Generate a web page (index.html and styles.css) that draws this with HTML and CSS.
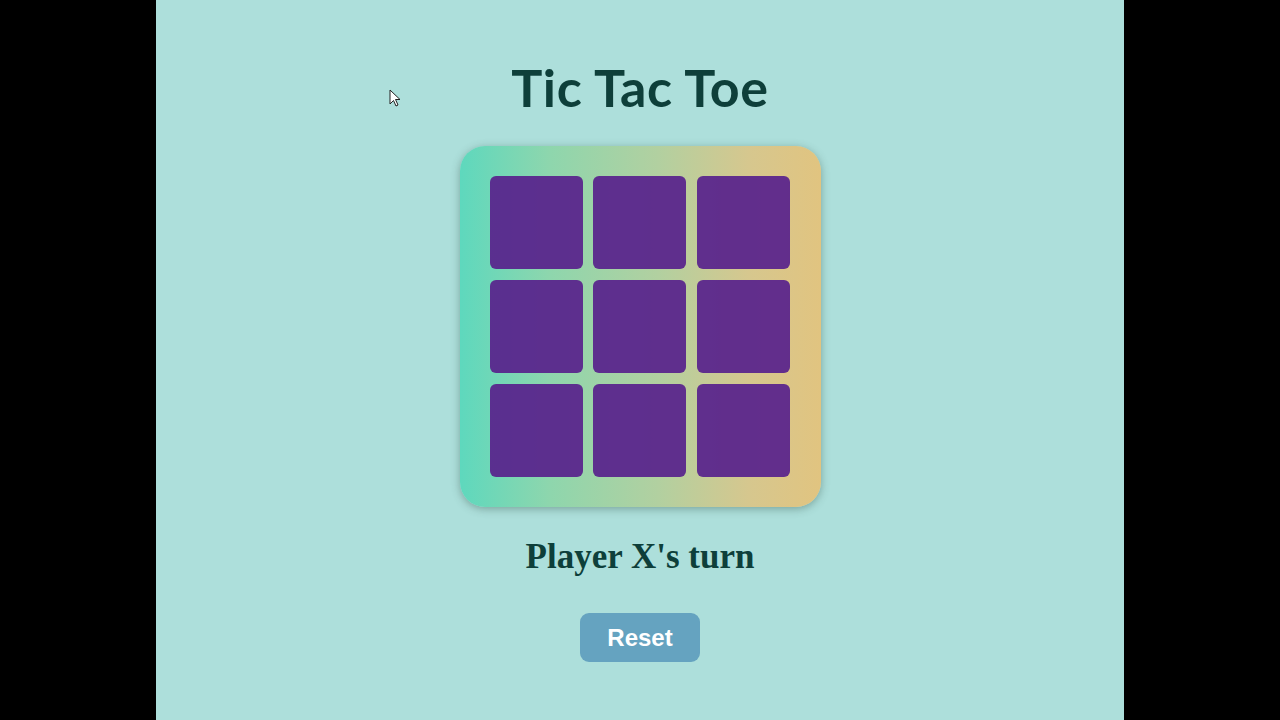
FILE: index.html
```html
<!DOCTYPE html>
<html lang="en">
<head>
<meta charset="utf-8">
<title>Tic Tac Toe</title>
<link rel="stylesheet" href="styles.css">
</head>
<body>
<main class="page">
  <h1 class="title">Tic Tac Toe</h1>
  <div class="board">
    <div class="cell"></div><div class="cell"></div><div class="cell"></div>
    <div class="cell"></div><div class="cell"></div><div class="cell"></div>
    <div class="cell"></div><div class="cell"></div><div class="cell"></div>
  </div>
  <p class="status">Player X's turn</p>
  <button class="reset">Reset</button>
  <svg class="cursor" width="12" height="19" viewBox="0 0 12 19"><path d="M1 1 L1 15 L4.5 11.5 L7 17 L9 16 L6.5 10.5 L11 10.5 Z" fill="#fff" stroke="#222" stroke-width="1" stroke-linejoin="round"/></svg>
</main>
</body>
</html>
```
FILE: styles.css
```css
html, body {
  margin: 0;
  padding: 0;
  background: #000;
}
.page {
  position: relative;
  width: 968px;
  height: 720px;
  margin: 0 auto;
  background: #addfdb;
  display: flex;
  flex-direction: column;
  align-items: center;
  box-sizing: border-box;
  padding-top: 55px;
}
.title {
  margin: 0;
  font-family: "Lato", "Open Sans", sans-serif;
  font-weight: 700;
  font-size: 52px;
  line-height: 64px;
  color: #0e3f3a;
  letter-spacing: 0.6px;
}
.board {
  margin-top: 27px;
  width: 361px;
  height: 361px;
  box-sizing: border-box;
  padding: 30px;
  border-radius: 25px;
  background: linear-gradient(90deg, #5ed8bd 0%, #8ed6ad 25%, #b2d0a0 55%, #d6c78e 80%, #e1c480 100%);
  box-shadow: 0 2px 8px rgba(60, 90, 80, 0.45);
  display: grid;
  grid-template-columns: repeat(3, 93px);
  grid-template-rows: repeat(3, 93px);
  column-gap: 10.5px;
  row-gap: 11px;
}
.cell {
  background: rgba(88, 34, 140, 0.93);
  border-radius: 6px;
}
.status {
  margin: 29px 0 0;
  font-family: "Liberation Serif", "Times New Roman", serif;
  font-weight: 700;
  font-size: 35px;
  line-height: 42px;
  color: #0e3f3a;
}
.reset {
  margin-top: 35px;
  width: 120px;
  height: 49px;
  border: none;
  border-radius: 9px;
  background: #65a3c0;
  color: #fff;
  font-family: "Liberation Sans", Arial, sans-serif;
  font-weight: 700;
  font-size: 24px;
  cursor: pointer;
}
.cursor {
  position: absolute;
  left: 233px;
  top: 89px;
}
```
